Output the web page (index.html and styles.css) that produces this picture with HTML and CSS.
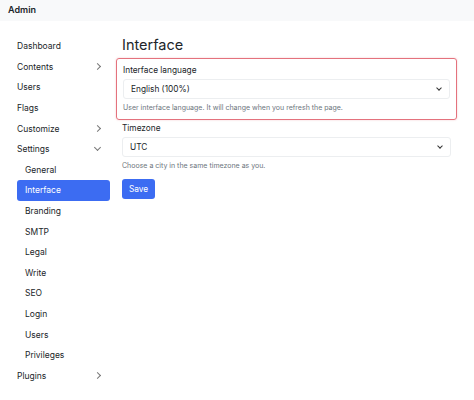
FILE: index.html
```html
<!DOCTYPE html>
<html lang="en">
<head>
    <meta charset="UTF-8">
    <title>Admin - Interface</title>
    <link rel="stylesheet" href="styles.css">
</head>
<body>
    <header class="topbar">Admin</header>
    <div class="layout">
        <nav class="sidebar">
            <a class="nav-item">Dashboard</a>
            <a class="nav-item">Contents <span class="chev right"></span></a>
            <a class="nav-item">Users</a>
            <a class="nav-item">Flags</a>
            <a class="nav-item">Customize <span class="chev right"></span></a>
            <a class="nav-item">Settings <span class="chev down"></span></a>
            <a class="nav-item sub">General</a>
            <a class="nav-item sub active">Interface</a>
            <a class="nav-item sub">Branding</a>
            <a class="nav-item sub">SMTP</a>
            <a class="nav-item sub">Legal</a>
            <a class="nav-item sub">Write</a>
            <a class="nav-item sub">SEO</a>
            <a class="nav-item sub">Login</a>
            <a class="nav-item sub">Users</a>
            <a class="nav-item sub">Privileges</a>
            <a class="nav-item">Plugins <span class="chev right"></span></a>
        </nav>
        <main class="content">
            <h1>Interface</h1>
            <div class="field highlight">
                <label>Interface language</label>
                <div class="select">English (100%) <span class="chev down small"></span></div>
                <p class="help">User interface language. It will change when you refresh the page.</p>
            </div>
            <div class="field">
                <label>Timezone</label>
                <div class="select">UTC <span class="chev down small"></span></div>
                <p class="help">Choose a city in the same timezone as you.</p>
            </div>
            <button class="save-btn">Save</button>
        </main>
    </div>
</body>
</html>
```

FILE: styles.css
```css
body {
    margin: 0;
    font-family: 'Inter', 'Noto Sans', sans-serif;
    color: #212529;
    background-color: #ffffff;
}
.topbar {
    height: 21px;
    line-height: 20px;
    padding: 0 8px;
    background-color: #f8f9fa;
    font-size: 9px;
    font-weight: 600;
}
.layout {
    display: flex;
    padding: 15px 0 0 17px;
}
.sidebar {
    width: 93px;
    flex-shrink: 0;
    display: flex;
    flex-direction: column;
}
.nav-item {
    display: flex;
    justify-content: space-between;
    align-items: center;
    height: 20.6px;
    font-size: 8.5px;
    color: #212529;
    border-radius: 3px;
    padding-right: 10px;
}
.nav-item.sub {
    padding-left: 8px;
}
.nav-item.active {
    background-color: #3c6cf2;
    color: #ffffff;
}
.chev {
    display: inline-block;
    width: 4px;
    height: 4px;
    border-right: 1px solid #777;
    border-bottom: 1px solid #777;
}
.chev.right {
    transform: rotate(-45deg);
}
.chev.down {
    transform: rotate(45deg);
    margin-top: -3px;
}
.chev.small {
    width: 3px;
    height: 3px;
    border-color: #333;
}
.content {
    padding-left: 12px;
    width: 329px;
}
h1 {
    font-size: 14.5px;
    font-weight: 400;
    margin: 0 0 4px;
    line-height: 18px;
}
.field {
    display: flex;
    flex-direction: column;
}
.field.highlight {
    margin: 0 -6px;
    padding: 5px 6px 6px 6px;
    border: 1.5px solid #e4727d;
    border-radius: 3px;
    box-shadow: 0 0 2px rgba(228, 114, 125, 0.4);
}
label {
    font-size: 8.3px;
    line-height: 12px;
    margin-bottom: 3px;
}
.select {
    display: flex;
    justify-content: space-between;
    align-items: center;
    height: 18px;
    padding: 0 8px 0 7px;
    border: 1px solid #eceef0;
    border-radius: 3px;
    font-size: 8.3px;
}
.help {
    margin: 4px 0 0;
    font-size: 7px;
    line-height: 10px;
    color: #6c757d;
}
.field + .field {
    margin-top: 2px;
}
.save-btn {
    margin-top: 8px;
    height: 20px;
    padding: 0 7px;
    border: none;
    border-radius: 3px;
    background-color: #3c6cf2;
    color: #ffffff;
    font-family: inherit;
    font-size: 8.3px;
}
```
